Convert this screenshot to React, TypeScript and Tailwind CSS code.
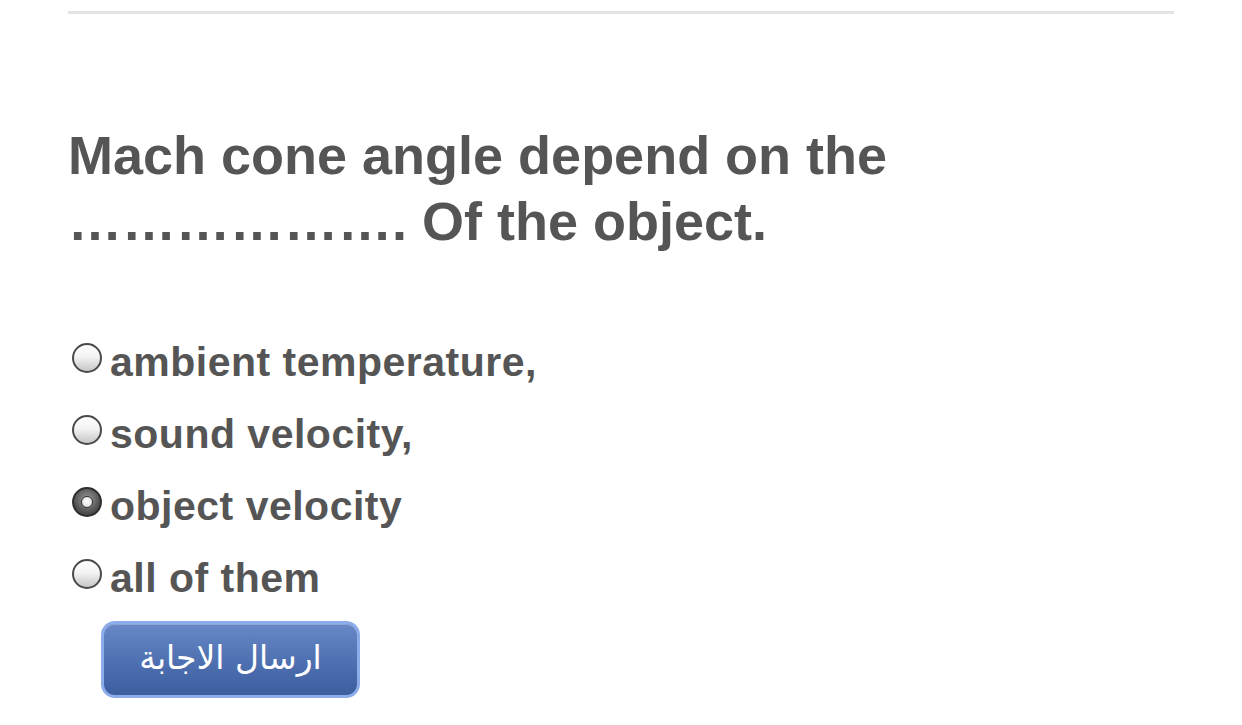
import React from 'react'

const options = ['ambient temperature,', 'sound velocity,', 'object velocity', 'all of them']

function Radio({ checked }: { checked: boolean }) {
  if (checked) {
    return (
      <span className="mt-[17px] ml-[4px] flex h-[30px] w-[30px] shrink-0 items-center justify-center rounded-full border-[2px] border-[#2e2e2e] bg-[radial-gradient(circle_at_50%_40%,#9a9a9a,#555555_60%,#333333)]">
        <span className="h-[12px] w-[12px] rounded-full border border-[#333] bg-[radial-gradient(circle_at_50%_40%,#ffffff,#d4d4d4)]" />
      </span>
    )
  }
  return (
    <span className="mt-[17px] ml-[4px] h-[30px] w-[30px] shrink-0 rounded-full border-[2px] border-[#4a4a4a] bg-[linear-gradient(180deg,#ffffff_0%,#f3f3f3_45%,#c6c6c6_100%)]" />
  )
}

export default function App() {
  return (
    <div className="min-h-[725px] bg-white px-[68px] font-['Liberation_Sans',Arial,sans-serif] text-[#555555]">
      <div className="pt-[11px]">
        <div className="h-[3px] w-[1106px] bg-[#e3e3e3]" />
      </div>
      <h1 className="mt-[108px] text-[54px] font-bold leading-[66px]">
        Mach cone angle depend on the
        <br />
        ………………. Of the object.
      </h1>
      <div className="mt-[72px] flex flex-col">
        {options.map((o, i) => (
          <label key={o} className="flex h-[72px] items-start gap-[8px] text-[41px] font-bold leading-[72px] tracking-[0.5px]">
            <Radio checked={i === 2} />
            <span>{o}</span>
          </label>
        ))}
      </div>
      <button
        type="button"
        className="ml-[33px] mt-[7px] flex h-[77px] w-[259px] items-center justify-center rounded-[14px] border-[3px] border-[#8dadea] bg-[linear-gradient(180deg,#6888c6_0%,#5072b2_50%,#3d5e9e_100%)] pb-[4px] font-['DejaVu_Sans','Noto_Sans',sans-serif] text-[33px] text-white shadow-[inset_0_1px_0_rgba(255,255,255,0.25)]"
      >
        ارسال الاجابة
      </button>
    </div>
  )
}
